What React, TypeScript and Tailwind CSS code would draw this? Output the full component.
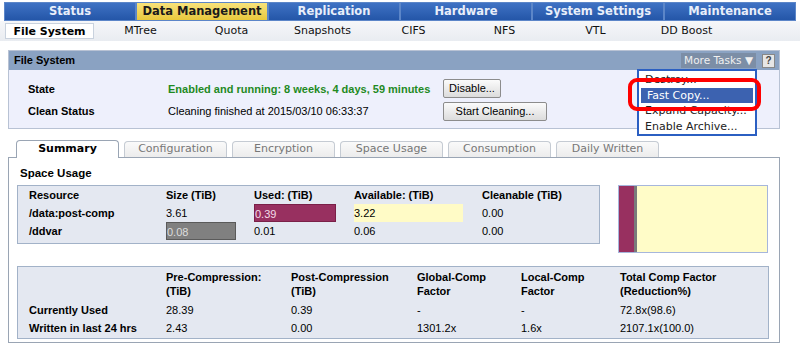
import React from 'react';

const mainTabs = ['Status', 'Data Management', 'Replication', 'Hardware', 'System Settings', 'Maintenance'];
const subTabs = ['File System', 'MTree', 'Quota', 'Snapshots', 'CIFS', 'NFS', 'VTL', 'DD Boost'];
const contentTabs = ['Summary', 'Configuration', 'Encryption', 'Space Usage', 'Consumption', 'Daily Written'];

function Cell({ children, className = '' }: { children?: React.ReactNode; className?: string }) {
  return <div className={`h-[18px] leading-[18px] whitespace-nowrap ${className}`}>{children}</div>;
}

export default function App() {
  return (
    <div className="relative w-[800px] h-[346px] overflow-hidden bg-white font-['Liberation_Sans',Arial,sans-serif] text-[11px] text-black">
      {/* main nav */}
      <div className="px-[4px] pt-[2px]">
        <div className="flex h-[19px] font-['DejaVu_Sans',Verdana,sans-serif] text-[11.5px] font-bold">
          {mainTabs.map((t, i) => (
            <div
              key={t}
              className={`flex-1 flex items-center justify-center border border-[#5c86c8] ${
                i === 1
                  ? 'bg-gradient-to-b from-[#f7e27a] to-[#e9c83a] text-[#1a1a1a]'
                  : 'bg-gradient-to-b from-[#3f72c4] to-[#2456a8] text-[#e8eefa]'
              }`}
            >
              {t}
            </div>
          ))}
        </div>
      </div>

      {/* sub nav */}
      <div className="flex h-[20px] items-center px-[4px] bg-gradient-to-b from-[#f6f7f9] to-[#e9ecf1] font-['DejaVu_Sans',Verdana,sans-serif] text-[11px]">
        {subTabs.map((t, i) => (
          <div key={t} className="w-[91px] flex justify-center">
            {i === 0 ? (
              <span className="px-[7px] h-[16px] leading-[15px] bg-white border border-[#c9d2de] font-bold">{t}</span>
            ) : (
              <span className="text-[#111]">{t}</span>
            )}
          </div>
        ))}
      </div>

      {/* file system panel */}
      <div className="mx-[8px] mt-[9px] w-[772px] border border-[#b8c2d4]">
        <div className="h-[19px] flex items-center justify-between pl-[5px] pr-[4px] bg-[#8aa2c2]">
          <span className="font-bold">File System</span>
          <div className="flex items-center gap-[6px]">
            <span className="h-[15px] px-[3px] flex items-center bg-[#7c8ea6] text-[#f0f0f0] font-['DejaVu_Sans',Verdana,sans-serif] text-[10.5px] whitespace-nowrap">
              More Tasks ▼
            </span>
            <span className="w-[13px] h-[14px] flex items-center justify-center bg-[#e6e6e6] border border-[#888] text-[10px] font-bold text-[#444]">?</span>
          </div>
        </div>
        <div className="h-[58px] bg-[#eef0fc] flex pl-[19px] pt-[10px]">
          <div className="w-[140px] font-bold flex flex-col gap-[4px]">
            <Cell>State</Cell>
            <Cell>Clean Status</Cell>
          </div>
          <div className="w-[275px] flex flex-col gap-[4px]">
            <Cell className="font-bold text-[#1f8a1f]">Enabled and running: 8 weeks, 4 days, 59 minutes</Cell>
            <Cell>Cleaning finished at 2015/03/10 06:33:37</Cell>
          </div>
          <div className="flex flex-col gap-[4px] -mt-[1px]">
            <button className="w-[58px] h-[19px] text-[11px] bg-gradient-to-b from-[#fbfbfb] to-[#dcdcdc] border border-[#8c8c8c] rounded-[2px]">Disable...</button>
            <button className="w-[104px] h-[19px] text-[11px] bg-gradient-to-b from-[#fbfbfb] to-[#dcdcdc] border border-[#8c8c8c] rounded-[2px]">Start Cleaning...</button>
          </div>
        </div>
      </div>

      {/* content tabs */}
      <div className="mx-[8px] mt-[10px] w-[772px]">
        <div className="flex items-end h-[18px] pl-[8px] gap-[5px] font-['DejaVu_Sans',Verdana,sans-serif] text-[11px]">
          {contentTabs.map((t, i) => (
            <div
              key={t}
              className={`w-[103px] flex items-center justify-center rounded-t-[4px] border border-b-0 ${
                i === 0
                  ? 'h-[18px] bg-white border-[#9aa5b4] font-bold relative top-[1px]'
                  : 'h-[16px] bg-gradient-to-b from-[#fafafa] to-[#ececec] border-[#c5cbd3] text-[#777]'
              }`}
            >
              {t}
            </div>
          ))}
        </div>
        <div className="h-[186px] border border-[#9aa5b4] bg-white px-[8px] pt-[7px]">
          <div className="font-bold text-[11.5px] pl-[3px] leading-[16px]">Space Usage</div>
          <div className="flex mt-[4px]">
            <div className="w-[583px] h-[59px] bg-[#e4e8f1] border border-[#a2b2c8] pl-[11px]">
              <div className="flex">
                <div className="w-[137px] font-bold">
                  <Cell>Resource</Cell>
                  <Cell>/data:post-comp</Cell>
                  <Cell>/ddvar</Cell>
                </div>
                <div className="w-[88px]">
                  <Cell className="font-bold">Size (TiB)</Cell>
                  <Cell>3.61</Cell>
                  <Cell className="w-[70px] bg-[#808080] border border-[#5a5a5a] text-[#ddd] leading-[16px]">0.08</Cell>
                </div>
                <div className="w-[100px]">
                  <Cell className="font-bold">Used: (TiB)</Cell>
                  <Cell className="w-[82px] bg-[#983060] border border-[#7a2048] text-[#f3dde8] leading-[16px]">0.39</Cell>
                  <Cell>0.01</Cell>
                </div>
                <div className="w-[128px]">
                  <Cell className="font-bold">Available: (TiB)</Cell>
                  <Cell className="w-[109px] bg-[#fffbc6]">3.22</Cell>
                  <Cell>0.06</Cell>
                </div>
                <div>
                  <Cell className="font-bold">Cleanable (TiB)</Cell>
                  <Cell>0.00</Cell>
                  <Cell>0.00</Cell>
                </div>
              </div>
            </div>
            <div className="ml-[18px] w-[150px] h-[68px] flex border border-[#a6b6dc]">
              <div className="w-[15px] bg-[#983060]" />
              <div className="w-[3px] bg-[#7a7a7a]" />
              <div className="flex-1 bg-[#fffcc8]" />
            </div>
          </div>
          <div className="mt-[13px] w-[752px] h-[73px] bg-[#e4e8f1] border border-[#a2b2c8] pl-[11px] pt-[1px]">
            <div className="flex leading-[14px]">
              <div className="w-[137px] font-bold">
                <div className="h-[33px]" />
                <Cell>Currently Used</Cell>
                <Cell>Written in last 24 hrs</Cell>
              </div>
              {[
                ['Pre-Compression:', '(TiB)', '28.39', '2.43', 'w-[125px]'],
                ['Post-Compression', '(TiB)', '0.39', '0.00', 'w-[126px]'],
                ['Global-Comp', 'Factor', '-', '1301.2x', 'w-[104px]'],
                ['Local-Comp', 'Factor', '-', '1.6x', 'w-[99px]'],
                ['Total Comp Factor', '(Reduction%)', '72.8x(98.6)', '2107.1x(100.0)', 'w-[140px]'],
              ].map(([a, b, c, d, w]) => (
                <div key={a} className={w}>
                  <div className="h-[33px] font-bold leading-[14px] pt-[2px]">
                    {a}
                    <br />
                    {b}
                  </div>
                  <Cell>{c}</Cell>
                  <Cell>{d}</Cell>
                </div>
              ))}
            </div>
          </div>
        </div>
      </div>

      {/* more tasks dropdown */}
      <div className="absolute left-[637px] top-[69px] w-[120px] h-[67px] bg-white border-2 border-[#2b5fc2] font-['DejaVu_Sans',Verdana,sans-serif] text-[11px] pt-[1px] whitespace-nowrap">
        <div className="h-[16px] leading-[16px] px-[6px] text-[#222]">Destroy...</div>
        <div className="h-[15px] leading-[15px] px-[6px] mx-[2px] bg-[#3c62b0] text-white">Fast Copy...</div>
        <div className="h-[16px] leading-[16px] px-[6px] text-[#222]">Expand Capacity...</div>
        <div className="h-[16px] leading-[16px] px-[6px] text-[#222]">Enable Archive...</div>
      </div>
      {/* callout highlight */}
      <div className="absolute left-[628px] top-[78px] w-[133px] h-[33px] border-[4px] border-[#ff0000] rounded-[9px]" />
    </div>
  );
}
